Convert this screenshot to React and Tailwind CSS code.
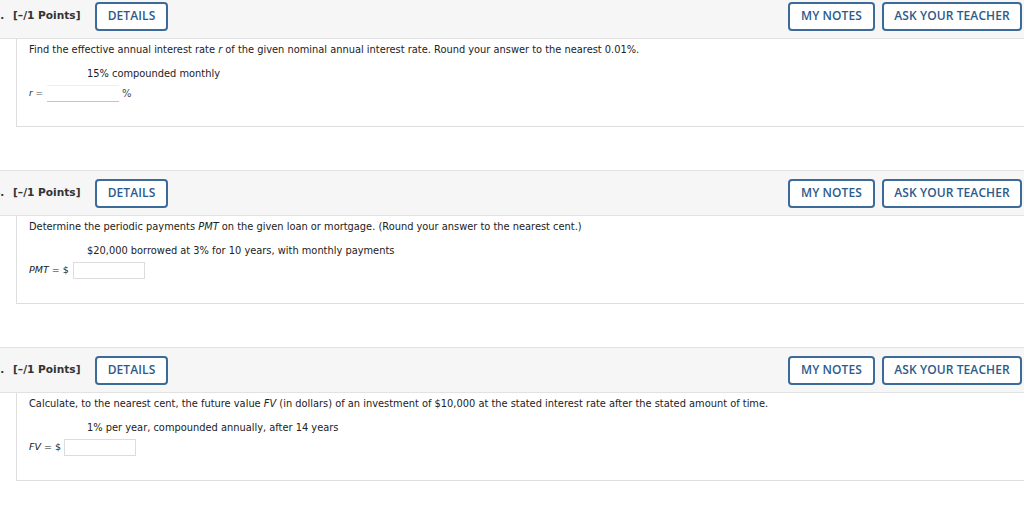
import React from "react";

const questions = [
  {
    num: "3.",
    prompt: (
      <>
        Find the effective annual interest rate <i>r</i> of the given nominal annual interest rate. Round your answer to the nearest 0.01%.
      </>
    ),
    given: "15% compounded monthly",
    kind: "rate",
  },
  {
    num: "4.",
    prompt: (
      <>
        Determine the periodic payments <i>PMT</i> on the given loan or mortgage. (Round your answer to the nearest cent.)
      </>
    ),
    given: "$20,000 borrowed at 3% for 10 years, with monthly payments",
    kind: "pmt",
  },
  {
    num: "5.",
    prompt: (
      <>
        Calculate, to the nearest cent, the future value <i>FV</i> (in dollars) of an investment of $10,000 at the stated interest rate after the stated amount of time.
      </>
    ),
    given: "1% per year, compounded annually, after 14 years",
    kind: "fv",
  },
];

function OutlineButton({ children, className = "" }) {
  return (
    <button
      className={
        "h-[29px] rounded-[4px] border-2 border-[#3d6b99] bg-white text-[12px] font-semibold tracking-[0.1px] text-[#2c5b8b] font-['Open_Sans',sans-serif] " +
        className
      }
    >
      {children}
    </button>
  );
}

function AnswerRow({ kind }) {
  if (kind === "rate") {
    return (
      <div className="mt-[5px] flex h-[17px] items-center">
        <span className="text-[9px] text-[#555]">
          <i className="text-[#222]">r</i> =
        </span>
        <span className="ml-[4px] h-[17px] w-[72px] border-t border-b border-t-[#eeeeee] border-b-[#c4c4c4]"></span>
        <span className="ml-[3px] text-[10px] text-[#444]">%</span>
      </div>
    );
  }
  return (
    <div className="mt-[5px] flex h-[17px] items-center">
      <span className="text-[9.5px]">
        <i>{kind === "pmt" ? "PMT" : "FV"}</i> = $
      </span>
      <span
        className={
          (kind === "pmt" ? "ml-[4px]" : "ml-[3px]") +
          " h-[17px] w-[72px] border border-[#dcdcdc]"
        }
      ></span>
    </div>
  );
}

function Question({ q }) {
  return (
    <div className="mb-[43px]">
      <div className="flex h-[46px] items-center justify-between border-y border-[#e2e2e2] bg-[#f6f6f6]">
        <div className="flex items-center">
          <div className="flex w-[95px] items-center font-bold text-[10.6px] text-[#333]">
            <span className="-ml-[7px] w-[20px]">{q.num}</span>
            <span>[–/1 Points]</span>
          </div>
          <OutlineButton className="w-[73px]">DETAILS</OutlineButton>
        </div>
        <div className="flex items-center gap-[7px] pr-[2px]">
          <OutlineButton className="w-[87px]">MY NOTES</OutlineButton>
          <OutlineButton className="w-[140px]">ASK YOUR TEACHER</OutlineButton>
        </div>
      </div>
      <div className="ml-[16px] h-[88px] border-b border-l border-[#dedede] pl-[12px] pt-[5px]">
        <p className="leading-[12px]">{q.prompt}</p>
        <p className="mt-[12px] pl-[58px] leading-[12px]">{q.given}</p>
        <AnswerRow kind={q.kind} />
      </div>
    </div>
  );
}

export default function App() {
  return (
    <div className="h-[518px] overflow-hidden bg-white text-[9.85px] text-[#222] font-['Verdana','DejaVu_Sans',sans-serif]">
      <div className="-mt-[7px]">
        {questions.map((q) => (
          <Question key={q.num} q={q} />
        ))}
      </div>
    </div>
  );
}
